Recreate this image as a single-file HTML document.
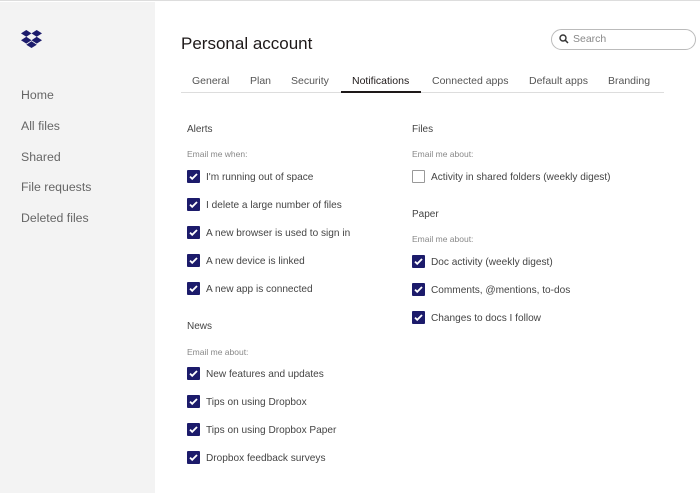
<!DOCTYPE html><html><head><style>
*{margin:0;padding:0;box-sizing:border-box}
body{width:700px;height:492px;overflow:hidden;background:#fff;font-family:"Liberation Sans",sans-serif;position:relative;border-top:1px solid #ddd}
.side{position:absolute;left:0;top:1px;width:155px;height:491px;background:#f3f3f3}
.nav{position:absolute;left:21px;font-size:12.3px;color:#666}
.a{position:absolute;white-space:nowrap}
.h1{left:181px;top:33px;font-size:17px;color:#1e1919}
.tab{top:74px;font-size:10.5px;color:#555}
.hd{font-size:10px;color:#444}
.sm{font-size:8.5px;color:#888}
.cb{position:absolute;width:13px;height:13px;background:#1c1b6b;border-radius:1px}
.cb svg{position:absolute;left:2px;top:2px}
.cb.off{background:#fff;border:1px solid #999}
.lb{font-size:10.1px;color:#444}
</style></head><body>
<div class="side"></div>
<svg class="a" style="left:21px;top:29px" width="21" height="18" viewBox="0 0 21 18"><g fill="#1c1b6b"><path d="M5.3 0L0 3.4l5.3 3.4 5.2-3.4zM15.7 0l-5.2 3.4 5.2 3.4L21 3.4zM0 10.2l5.3 3.4 5.2-3.4-5.2-3.4zM15.7 6.8l-5.2 3.4 5.2 3.4L21 10.2zM5.3 14.7l5.2 3.3 5.3-3.3-5.3-3.4z"/></g></svg>
<div class="nav" style="top:87px">Home</div>
<div class="nav" style="top:118px">All files</div>
<div class="nav" style="top:149px">Shared</div>
<div class="nav" style="top:179px">File requests</div>
<div class="nav" style="top:210px">Deleted files</div>
<div class="a h1">Personal account</div>
<div class="a" style="left:551px;top:28px;width:145px;height:21px;border:1px solid #bbb;border-radius:11px"></div>
<svg class="a" style="left:559px;top:33px" width="10" height="10" viewBox="0 0 10 10"><circle cx="4" cy="4" r="3" fill="none" stroke="#333" stroke-width="1.4"/><path d="M6.2 6.2L9 9" stroke="#333" stroke-width="1.5"/></svg>
<div class="a" style="left:573px;top:32px;font-size:10.5px;color:#888">Search</div>
<div class="a tab" style="left:192px">General</div>
<div class="a tab" style="left:250px">Plan</div>
<div class="a tab" style="left:291px">Security</div>
<div class="a tab" style="left:352px;color:#1e1919">Notifications</div>
<div class="a tab" style="left:432px">Connected apps</div>
<div class="a tab" style="left:529px">Default apps</div>
<div class="a tab" style="left:608px">Branding</div>
<div class="a" style="left:181px;top:91px;width:483px;height:1px;background:#ddd"></div>
<div class="a" style="left:341px;top:90px;width:80px;height:2px;background:#1e1919"></div>

<div class="a hd" style="left:187px;top:123px">Alerts</div>
<div class="a sm" style="left:187px;top:148px">Email me when:</div>
<div class="a hd" style="left:187px;top:320px">News</div>
<div class="a sm" style="left:187px;top:346px">Email me about:</div>
<div class="a hd" style="left:412px;top:123px">Files</div>
<div class="a sm" style="left:412px;top:148px">Email me about:</div>
<div class="a hd" style="left:412px;top:208px">Paper</div>
<div class="a sm" style="left:412px;top:233px">Email me about:</div>

<div id="c"></div>
<script>
var items=[[187,176,"I'm running out of space",1],[187,204,"I delete a large number of files",1],[187,232,"A new browser is used to sign in",1],[187,260,"A new device is linked",1],[187,288,"A new app is connected",1],[187,373,"New features and updates",1],[187,401,"Tips on using Dropbox",1],[187,429,"Tips on using Dropbox Paper",1],[187,457,"Dropbox feedback surveys",1],[412,176,"Activity in shared folders (weekly digest)",0],[412,261,"Doc activity (weekly digest)",1],[412,289,"Comments, @mentions, to-dos",1],[412,317,"Changes to docs I follow",1]];
var h="";items.forEach(function(i){h+='<div class="cb'+(i[3]?'':' off')+'" style="left:'+i[0]+'px;top:'+(i[1]-7)+'px">'+(i[3]?'<svg width="9" height="9" viewBox="0 0 9 9"><path d="M1 4.6l2.2 2.2L8 2" fill="none" stroke="#fff" stroke-width="1.8"/></svg>':'')+'</div><div class="a lb" style="left:'+(i[0]+19)+'px;top:'+(i[1]-5)+'px">'+i[2]+'</div>';});
document.getElementById("c").innerHTML=h;
</script>
</body></html>
